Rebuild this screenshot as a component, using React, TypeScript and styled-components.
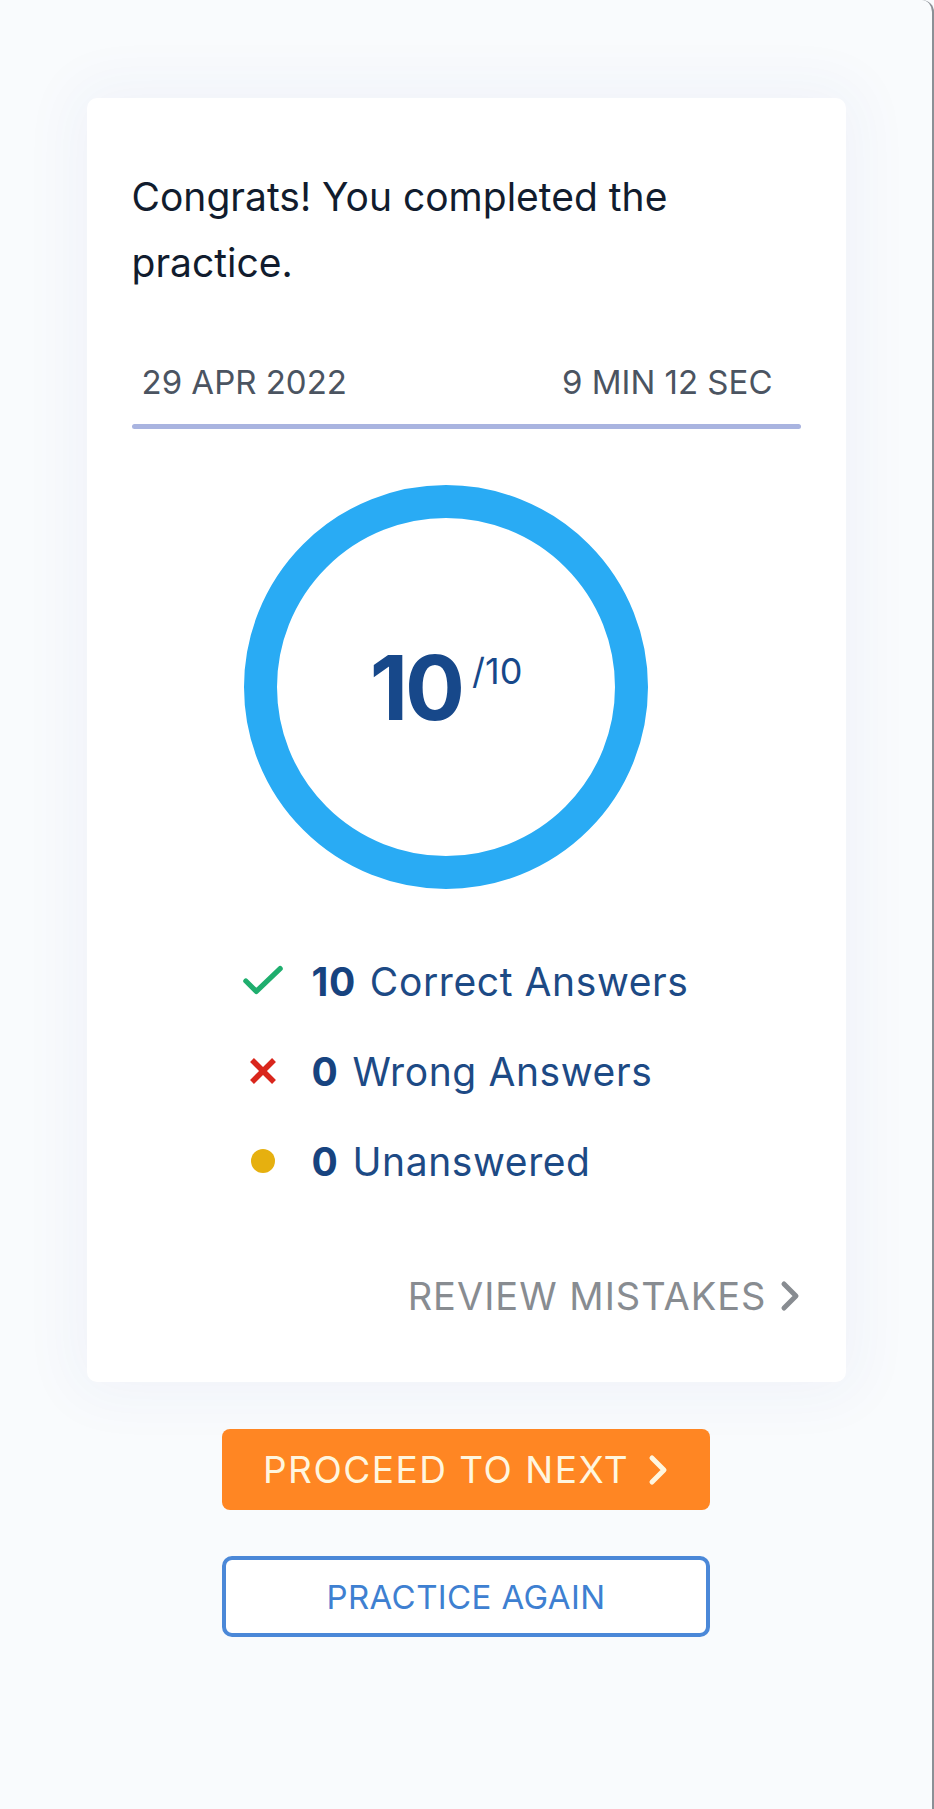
import styled, { createGlobalStyle } from "styled-components";

const GlobalStyle = createGlobalStyle`
  html, body {
    margin: 0;
    padding: 0;
    background: #f9fbfd;
  }
  * {
    box-sizing: border-box;
  }
  body {
    font-family: Inter, "Noto Sans", "Liberation Sans", sans-serif;
  }
`;

const Sheet = styled.div`
  width: 934px;
  min-height: 1809px;
  display: flex;
  flex-direction: column;
  align-items: center;
  padding-top: 98px;
  background: #f9fbfd;
  border-right: 2px solid #8b9096;
  border-top-right-radius: 12px;
`;

const Card = styled.section`
  width: 759px;
  padding: 66px 45px 61px;
  background: #ffffff;
  border-radius: 10px;
  box-shadow: 0 0 60px 14px rgba(40, 80, 160, 0.045);
  display: flex;
  flex-direction: column;
`;

const Title = styled.h1`
  margin: 0;
  font-size: 39px;
  font-weight: 400;
  line-height: 66px;
  color: #111c2e;
  max-width: 600px;
`;

const DateRow = styled.div`
  margin-top: 66px;
  padding: 0 28px 0 10px;
  display: flex;
  justify-content: space-between;
  font-size: 33px;
  line-height: 40px;
  color: #4b5461;
`;

const Rule = styled.div`
  margin-top: 22px;
  height: 5px;
  border-radius: 3px;
  background: #a9b4e0;
`;

const ChartWrap = styled.div`
  margin-top: 56px;
  display: flex;
  justify-content: center;
  padding-right: 40px;
`;

const Ring = styled.div`
  position: relative;
  width: 404px;
  height: 404px;
`;

const RingSvg = styled.svg`
  display: block;
`;

const Score = styled.div`
  position: absolute;
  inset: 0;
  display: flex;
  justify-content: center;
  align-items: center;
  color: #17488a;
`;

const ScoreValue = styled.span`
  font-size: 89px;
  font-weight: 700;
  letter-spacing: -3px;
  line-height: 1;
`;

const ScoreTotal = styled.span`
  align-self: flex-start;
  margin-top: 168px;
  margin-left: 10px;
  font-size: 36px;
  font-weight: 400;
  line-height: 1;
`;

const Stats = styled.ul`
  list-style: none;
  margin: 47px auto 0;
  padding: 0;
  display: flex;
  flex-direction: column;
`;

const StatRow = styled.li`
  height: 90px;
  display: flex;
  align-items: center;
  gap: 28px;
  font-size: 39px;
  color: #1d4a85;
  letter-spacing: 0.6px;
`;

const IconCell = styled.span`
  width: 40px;
  display: flex;
  justify-content: center;
  align-items: center;
`;

const Count = styled.b`
  font-weight: 700;
  color: #17437f;
  margin-right: 14px;
`;

const Dot = styled.span`
  width: 24px;
  height: 24px;
  border-radius: 50%;
  background: #e6b00f;
`;

const ReviewLink = styled.a`
  margin-top: 65px;
  align-self: flex-end;
  display: flex;
  align-items: center;
  gap: 12px;
  font-size: 38px;
  letter-spacing: 1px;
  line-height: 50px;
  color: #888c91;
  text-decoration: none;
  cursor: pointer;
`;

const Button = styled.button<{ $primary?: boolean }>`
  width: 488px;
  height: 81px;
  display: flex;
  justify-content: center;
  align-items: center;
  gap: 18px;
  font-family: inherit;
  font-size: ${({ $primary }) => ($primary ? "37px" : "33px")};
  letter-spacing: ${({ $primary }) => ($primary ? "1.5px" : "0.4px")};
  border-radius: ${({ $primary }) => ($primary ? "8px" : "10px")};
  border: ${({ $primary }) => ($primary ? "none" : "4px solid #4b88d8")};
  background: ${({ $primary }) => ($primary ? "#ff8623" : "#ffffff")};
  color: ${({ $primary }) => ($primary ? "#fff6df" : "#3e80d1")};
  margin-top: ${({ $primary }) => ($primary ? "47px" : "46px")};
  cursor: pointer;
`;

const Chevron = ({ color }: { color: string }) => (
  <svg width="22" height="32" viewBox="0 0 22 32">
    <polyline
      points="5,4 17,16 5,28"
      fill="none"
      stroke={color}
      strokeWidth="5"
      strokeLinecap="round"
      strokeLinejoin="round"
    />
  </svg>
);

const App = () => {
  return (
    <>
      <GlobalStyle />
      <Sheet>
        <Card>
          <Title>Congrats! You completed the practice.</Title>
          <DateRow>
            <span>29 APR 2022</span>
            <span>9 MIN 12 SEC</span>
          </DateRow>
          <Rule />
          <ChartWrap>
            <Ring>
              <RingSvg width="404" height="404" viewBox="0 0 404 404">
                <circle cx="202" cy="202" r="185.5" fill="none" stroke="#29abf4" strokeWidth="33" />
              </RingSvg>
              <Score>
                <ScoreValue>10</ScoreValue>
                <ScoreTotal>/10</ScoreTotal>
              </Score>
            </Ring>
          </ChartWrap>
          <Stats>
            <StatRow>
              <IconCell>
                <svg width="42" height="32" viewBox="0 0 42 32">
                  <polyline
                    points="3,16 14,27 39,3"
                    fill="none"
                    stroke="#1fae6e"
                    strokeWidth="5.5"
                    strokeLinecap="round"
                    strokeLinejoin="round"
                  />
                </svg>
              </IconCell>
              <span>
                <Count>10</Count>Correct Answers
              </span>
            </StatRow>
            <StatRow>
              <IconCell>
                <svg width="28" height="28" viewBox="0 0 28 28">
                  <path d="M3 3 L25 25 M25 3 L3 25" stroke="#d9261c" strokeWidth="5.5" />
                </svg>
              </IconCell>
              <span>
                <Count>0</Count>Wrong Answers
              </span>
            </StatRow>
            <StatRow>
              <IconCell>
                <Dot />
              </IconCell>
              <span>
                <Count>0</Count>Unanswered
              </span>
            </StatRow>
          </Stats>
          <ReviewLink>
            REVIEW MISTAKES
            <Chevron color="#888c91" />
          </ReviewLink>
        </Card>
        <Button $primary>
          PROCEED TO NEXT
          <Chevron color="#fff6df" />
        </Button>
        <Button>PRACTICE AGAIN</Button>
      </Sheet>
    </>
  );
};

export default App;
